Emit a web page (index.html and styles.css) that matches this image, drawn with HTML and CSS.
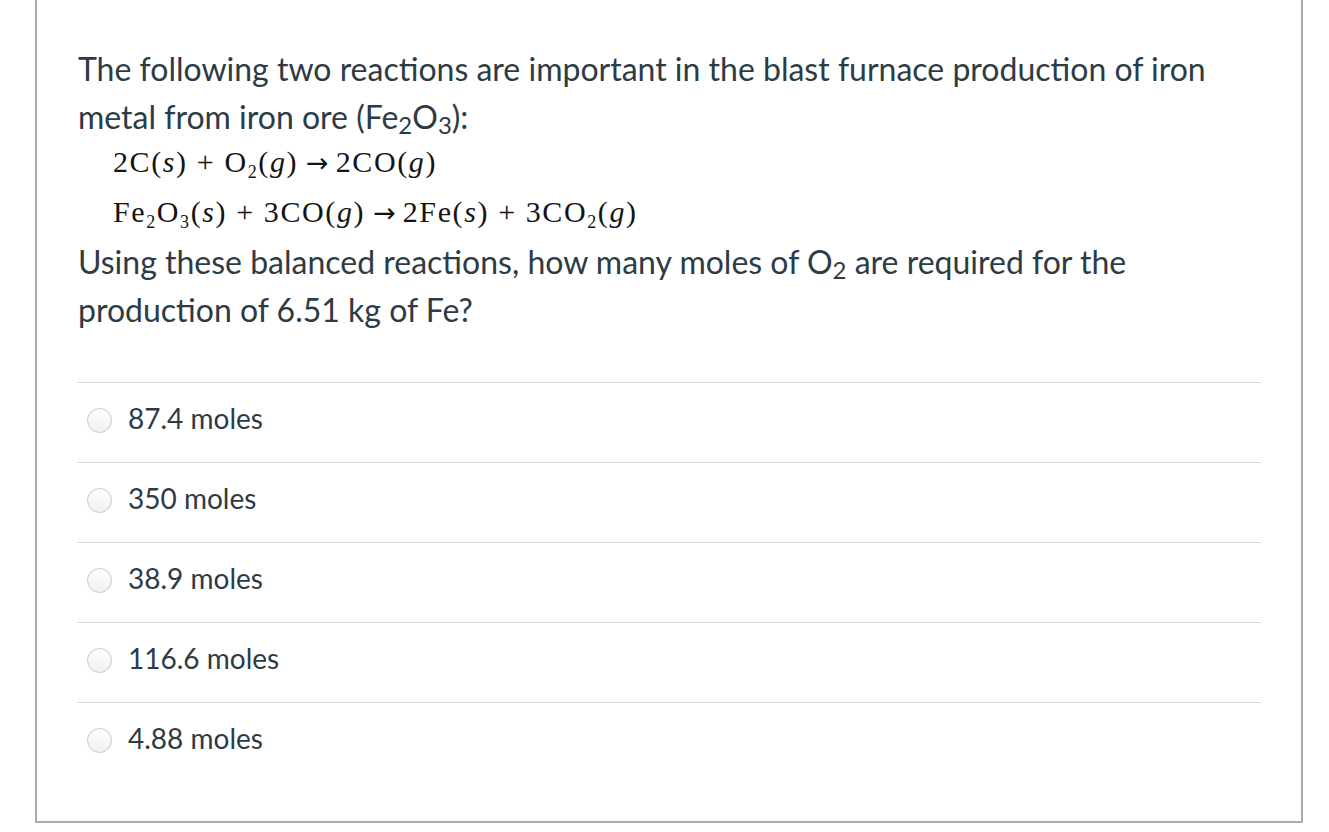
FILE: index.html
```html
<!DOCTYPE html>
<html lang="en">
<head>
<meta charset="utf-8">
<title>Question</title>
<link rel="stylesheet" href="styles.css">
</head>
<body>
<div class="question">
  <div class="question-text">
    <p class="para">The following two reactions are important in the blast furnace production of iron metal from iron ore (Fe<sub>2</sub>O<sub>3</sub>):</p>
    <div class="eqs">
      <div class="eq">2C(<i>s</i>) + O<sub>2</sub>(<i>g</i>)<span class="arrow">→</span>2CO(<i>g</i>)</div>
      <div class="eq">Fe<sub>2</sub>O<sub>3</sub>(<i>s</i>) + 3CO(<i>g</i>)<span class="arrow">→</span>2Fe(<i>s</i>) + 3CO<sub>2</sub>(<i>g</i>)</div>
    </div>
    <p class="para">Using these balanced reactions, how many moles of O<sub>2</sub> are required for the production of 6.51 kg of Fe?</p>
  </div>
  <div class="answers">
    <div class="answer"><span class="radio"></span><span class="label">87.4 moles</span></div>
    <div class="answer"><span class="radio"></span><span class="label">350 moles</span></div>
    <div class="answer"><span class="radio"></span><span class="label">38.9 moles</span></div>
    <div class="answer"><span class="radio"></span><span class="label">116.6 moles</span></div>
    <div class="answer"><span class="radio"></span><span class="label">4.88 moles</span></div>
  </div>
</div>
</body>
</html>
```
FILE: styles.css
```css
html, body {
  margin: 0;
  padding: 0;
  background: #ffffff;
}

body {
  font-family: Lato, "Open Sans", sans-serif;
  color: #2d3b45;
}

.question {
  box-sizing: border-box;
  margin-left: 35px;
  width: 1268px;
  height: 823px;
  border: 2px solid #acacac;
  border-top: 0;
  padding: 45px 40px 0 41px;
}

.para {
  margin: 0;
  font-size: 32px;
  line-height: 48px;
}

.para sub {
  font-size: 0.75em;
  line-height: 0;
  vertical-align: -0.22em;
}

.eqs {
  margin: -4px 0 1px 0;
  padding-left: 35px;
  font-family: "Liberation Serif", "Times New Roman", serif;
  font-size: 30px;
  line-height: 50px;
  letter-spacing: 1.6px;
  color: #141414;
}

.eq i {
  font-style: italic;
}

.eq sub {
  font-size: 0.6em;
  line-height: 0;
  vertical-align: -0.32em;
}

.arrow {
  font-family: "DejaVu Sans", sans-serif;
  font-size: 27px;
  letter-spacing: 0;
  line-height: 0;
  margin: 0 7px 0 8px;
}

.answers {
  margin: 48px 0 0 -1px;
}

.answer {
  display: flex;
  align-items: center;
  box-sizing: content-box;
  height: 75px;
  border-top: 1px solid #d9d9d9;
  padding-bottom: 4px;
}

.radio {
  box-sizing: border-box;
  flex: none;
  width: 25px;
  height: 25px;
  margin-left: 10px;
  margin-right: 16px;
  border-radius: 50%;
  border: 1px solid #c8c8c8;
  background: linear-gradient(#ffffff, #efefef);
}

.label {
  font-size: 28px;
  line-height: 36px;
  padding-bottom: 6px;
}
```
